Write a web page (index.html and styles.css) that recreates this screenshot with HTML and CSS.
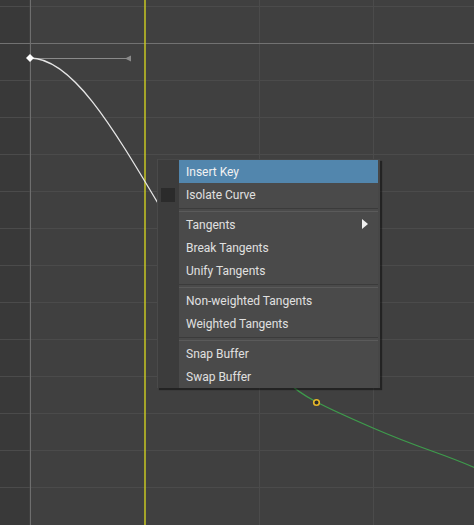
FILE: index.html
```html
<!DOCTYPE html>
<html lang="en">
<head>
    <meta charset="UTF-8">
    <title>Graph Editor</title>
    <link rel="stylesheet" href="styles.css">
</head>
<body>
    <div class="graph-view">
        <svg class="graph-canvas" viewBox="0 0 474 525" width="474" height="525">
            <rect x="0" y="0" width="29" height="525" fill="#393939"/>
            <g class="grid" stroke="#4b4b4b" stroke-width="1">
                <line x1="0" y1="6.5" x2="474" y2="6.5"/>
                <line x1="0" y1="80.5" x2="474" y2="80.5"/>
                <line x1="0" y1="117.5" x2="474" y2="117.5"/>
                <line x1="0" y1="154.5" x2="474" y2="154.5"/>
                <line x1="0" y1="191.5" x2="474" y2="191.5"/>
                <line x1="0" y1="228.5" x2="474" y2="228.5"/>
                <line x1="0" y1="265.5" x2="474" y2="265.5"/>
                <line x1="0" y1="302.5" x2="474" y2="302.5"/>
                <line x1="0" y1="339.5" x2="474" y2="339.5"/>
                <line x1="0" y1="376.5" x2="474" y2="376.5"/>
                <line x1="0" y1="413.5" x2="474" y2="413.5"/>
                <line x1="0" y1="450.5" x2="474" y2="450.5"/>
                <line x1="0" y1="487.5" x2="474" y2="487.5"/>
                <line x1="259.5" y1="0" x2="259.5" y2="525"/>
                <line x1="373.5" y1="0" x2="373.5" y2="525"/>
            </g>
            <line x1="0" y1="43.5" x2="474" y2="43.5" stroke="#727272"/>
            <line x1="30.5" y1="0" x2="30.5" y2="525" stroke="#6e6e6e"/>
            <line x1="145" y1="0" x2="145" y2="525" stroke="#d0d020" stroke-width="1.4"/>

            <!-- tangent handle -->
            <line x1="30" y1="58.5" x2="127" y2="58.5" stroke="#8a8a8a"/>
            <polygon points="125,58.5 131,55.5 131,61.5" fill="#8a8a8a"/>

            <!-- animation curve -->
            <path d="M30,58 C72,58 112,126 162,210" fill="none" stroke="#e6e6e6" stroke-width="1.3"/>
            <path d="M288,382 C300,395 320,405 373,428 S440,452 480,470" fill="none" stroke="#3e9b4c" stroke-width="1.3"/>

            <polygon points="30,54 34,58 30,62 26,58" fill="#ffffff"/>
            <circle cx="316.5" cy="402.5" r="2.8" fill="#2a2a2a" stroke="#e8b82a" stroke-width="1.6"/>
        </svg>

        <div class="context-menu">
            <div class="menu-row">
                <span class="menu-gutter"></span>
                <span class="menu-item active">Insert Key</span>
            </div>
            <div class="menu-row">
                <span class="menu-gutter"><i class="menu-check"></i></span>
                <span class="menu-item">Isolate Curve</span>
            </div>
            <div class="menu-row">
                <span class="menu-gutter"></span>
                <span class="menu-sep"></span>
            </div>
            <div class="menu-row">
                <span class="menu-gutter"></span>
                <span class="menu-item has-sub">Tangents</span>
            </div>
            <div class="menu-row">
                <span class="menu-gutter"></span>
                <span class="menu-item">Break Tangents</span>
            </div>
            <div class="menu-row">
                <span class="menu-gutter"></span>
                <span class="menu-item">Unify Tangents</span>
            </div>
            <div class="menu-row">
                <span class="menu-gutter"></span>
                <span class="menu-sep"></span>
            </div>
            <div class="menu-row">
                <span class="menu-gutter"></span>
                <span class="menu-item">Non-weighted Tangents</span>
            </div>
            <div class="menu-row">
                <span class="menu-gutter"></span>
                <span class="menu-item">Weighted Tangents</span>
            </div>
            <div class="menu-row">
                <span class="menu-gutter"></span>
                <span class="menu-sep"></span>
            </div>
            <div class="menu-row">
                <span class="menu-gutter"></span>
                <span class="menu-item">Snap Buffer</span>
            </div>
            <div class="menu-row">
                <span class="menu-gutter"></span>
                <span class="menu-item">Swap Buffer</span>
            </div>
        </div>
    </div>
</body>
</html>
```

FILE: styles.css
```css
* {
    margin: 0;
    padding: 0;
    box-sizing: border-box;
}

body {
    background: #404040;
    font-family: Roboto, 'Noto Sans', sans-serif;
    overflow: hidden;
}

.graph-view {
    position: relative;
    width: 474px;
    height: 525px;
    background: #404040;
}

.graph-canvas {
    display: block;
}

.context-menu {
    position: absolute;
    left: 157px;
    top: 159px;
    width: 223px;
    display: flex;
    flex-direction: column;
    padding: 1px 2px 0 0;
    background: #474747;
    border-left: 1px solid #4a4a4a;
    box-shadow: 2px 2px 1px rgba(0, 0, 0, 0.45);
}

.menu-row {
    display: flex;
}

.menu-gutter {
    width: 21px;
    flex-shrink: 0;
    background: #3c3c3c;
    display: flex;
    align-items: center;
    justify-content: center;
}

.menu-check {
    display: block;
    width: 14px;
    height: 14px;
    background: #2b2b2b;
    margin-right: 1px;
}

.menu-item {
    flex: 1;
    height: 23px;
    line-height: 21px;
    padding: 2px 0 0 7px;
    font-size: 12px;
    color: #e0e0e0;
    background: #4a4a4a;
    white-space: nowrap;
    position: relative;
}

.menu-item.active {
    background: #5286ad;
    color: #f2f2f2;
}

.menu-item.has-sub::after {
    content: "";
    position: absolute;
    right: 10px;
    top: 6px;
    border-left: 6px solid #f0f0f0;
    border-top: 5px solid transparent;
    border-bottom: 5px solid transparent;
}

.menu-sep {
    flex: 1;
    height: 7px;
    background: #4a4a4a;
    display: flex;
    align-items: center;
}

.menu-sep::before {
    content: "";
    display: block;
    width: 100%;
    height: 2px;
    border-top: 1px solid #3b3b3b;
    border-bottom: 1px solid #5a5a5a;
}
```
